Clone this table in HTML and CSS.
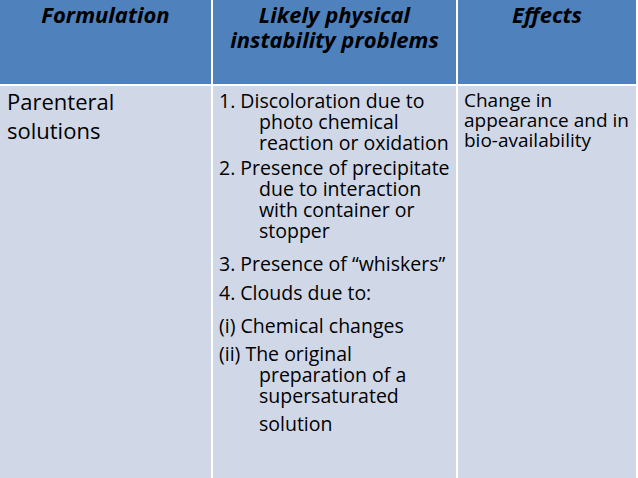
FILE: index.html
```html
<!DOCTYPE html>
<html>
<head>
<meta charset="utf-8">
<link rel="stylesheet" href="styles.css">
</head>
<body>
<div class="table">
  <div class="th">Formulation</div>
  <div class="th">Likely physical<br>instability problems</div>
  <div class="th">Effects</div>
  <div class="td c1">Parenteral<br>solutions</div>
  <div class="td c2">
    <div class="item">1. Discoloration due to<br>photo chemical<br>reaction or oxidation</div>
    <div class="item g4">2. Presence of precipitate<br>due to interaction<br>with container or<br>stopper</div>
    <div class="item g12">3. Presence of “whiskers”</div>
    <div class="item g8">4. Clouds due to:</div>
    <div class="item g12">(i) Chemical changes</div>
    <div class="item g7">(ii) The original<br>preparation of a<br>supersaturated</div>
    <div class="item g7 cont">solution</div>
  </div>
  <div class="td c3">Change in<br>appearance and in<br>bio-availability</div>
</div>
</body>
</html>
```
FILE: styles.css
```css
html, body {
  margin: 0;
  padding: 0;
  background: #ffffff;
}
body {
  width: 638px;
  height: 478px;
  overflow: hidden;
}
.table {
  display: grid;
  grid-template-columns: 211px 243px 178px;
  grid-template-rows: 84px 392px;
  gap: 2px;
  width: 636px;
  background: #ffffff;
}
.th {
  background: #4f81bd;
  color: #000;
  font-family: "Open Sans", "DejaVu Sans", sans-serif;
  font-style: italic;
  font-weight: 700;
  font-size: 22px;
  line-height: 25px;
  text-align: center;
  padding-top: 2px;
}
.td {
  background: #d0d8e8;
  color: #000;
  font-family: "Open Sans", "DejaVu Sans", sans-serif;
  white-space: nowrap;
}
.c1 {
  font-size: 22px;
  line-height: 29px;
  padding: 1px 0 0 7px;
}
.c2 {
  font-size: 19.5px;
  line-height: 21px;
  padding: 4px 0 0 6px;
}
.item {
  padding-left: 40px;
  text-indent: -40px;
}
.item.cont {
  text-indent: 0;
}
.g4 { margin-top: 4px; }
.g7 { margin-top: 7px; }
.g8 { margin-top: 8px; }
.g12 { margin-top: 12px; }
.c3 {
  font-size: 19px;
  line-height: 20px;
  padding: 4px 0 0 6px;
}
```
